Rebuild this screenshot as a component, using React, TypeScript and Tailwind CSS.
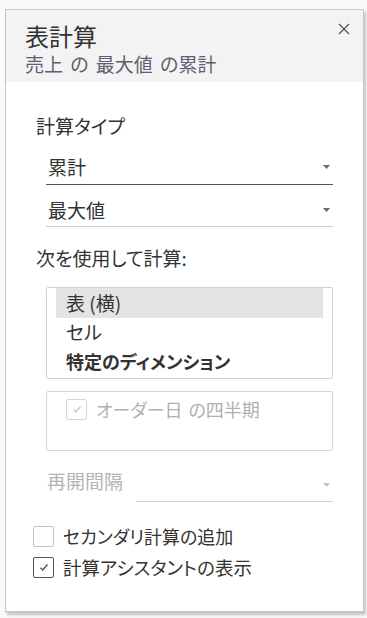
import React from 'react';

const Arrow = ({ light }: { light?: boolean }) => (
  <svg width="7" height="4" viewBox="0 0 7 4" className="shrink-0">
    <path d="M0 0 L7 0 L3.5 4 Z" fill={light ? '#c4c4c4' : '#6b6b6b'} />
  </svg>
);

const Check = ({ color }: { color: string }) => (
  <svg width="10" height="9" viewBox="0 0 10 9">
    <path d="M1.5 4.8 L3.8 7 L8.5 1.5" stroke={color} strokeWidth="1.4" fill="none" />
  </svg>
);

const App: React.FC = () => {
  return (
    <div className="w-[367px] h-[618px] bg-[#fafafa] overflow-hidden pt-[9px] pl-[5px] font-['Noto_Sans_CJK_JP','Noto_Sans',sans-serif] [font-feature-settings:'palt']">
      <div className="w-[359px] h-[603px] bg-white border border-[#c6c6c6] shadow-[2px_3px_3px_rgba(0,0,0,0.22)]">
        {/* Header */}
        <div className="relative h-[72px] bg-[#f3f3f3] pl-[19px] pt-[12px]">
          <div className="text-[24px] leading-[28px] text-[#333]">表計算</div>
          <div className="mt-[2px] text-[19px] leading-[24px] text-[#5b6170] [word-spacing:3px]">売上 の 最大値 の累計</div>
          <button className="absolute top-[12px] right-[12px] w-[14px] h-[14px] flex items-center justify-center">
            <svg width="12" height="12" viewBox="0 0 12 12">
              <path d="M1 1 L11 11 M11 1 L1 11" stroke="#555" strokeWidth="1.3" />
            </svg>
          </button>
        </div>

        {/* Body */}
        <div className="px-[30px] pt-[32px] text-[#333] text-[19px]">
          <div className="leading-[24px]">計算タイプ</div>

          <div className="ml-[10px] mt-[12px] h-[35px] flex items-center justify-between border-b border-[#555] pl-[2px] pr-[3px]">
            <span className="leading-[24px]">累計</span>
            <Arrow />
          </div>
          <div className="ml-[10px] mt-[8px] h-[34px] flex items-center justify-between border-b border-[#ccc] pl-[2px] pr-[3px]">
            <span className="leading-[24px]">最大値</span>
            <Arrow />
          </div>

          <div className="mt-[19px] leading-[24px]">次を使用して計算:</div>

          <div className="ml-[10px] mt-[17px] h-[92px] border border-[#cfcfcf] rounded-[2px] pl-[9px] pr-[9px] pt-0">
            <div className="h-[30px] bg-[#e4e4e4] pl-[10px] flex items-center">表 (横)</div>
            <div className="h-[29px] pl-[10px] flex items-center">セル</div>
            <div className="h-[29px] pl-[10px] flex items-center font-bold text-[18px]">特定のディメンション</div>
          </div>

          <div className="ml-[10px] mt-[12px] h-[60px] border border-[#d6d6d6] rounded-[2px] pl-[19px] pt-[4px]">
            <div className="flex items-center gap-[9px]">
              <div className="w-[21px] h-[21px] border border-[#d4d4d4] rounded-[2px] flex items-center justify-center">
                <Check color="#c8c8c8" />
              </div>
              <span className="text-[18px] text-[#b0b0b0] [word-spacing:2px]">オーダー日 の四半期</span>
            </div>
          </div>

          <div className="ml-[11px] mt-[17px] flex items-end">
            <span className="w-[89px] leading-[24px] text-[#b3b3b3] pb-[9px]">再開間隔</span>
            <div className="flex-1 h-[34px] flex items-center justify-end border-b border-[#d0d0d0] pr-[3px]">
              <Arrow light />
            </div>
          </div>

          <div className="-ml-[3px] mt-[23px] flex flex-col gap-[9px]">
            <div className="flex items-center gap-[9px]">
              <div className="w-[21px] h-[21px] border border-[#c4c4c4] rounded-[2px]" />
              <span className="text-[18px] leading-[22px]">セカンダリ計算の追加</span>
            </div>
            <div className="flex items-center gap-[9px]">
              <div className="w-[21px] h-[21px] border border-[#555] rounded-[2px] flex items-center justify-center">
                <Check color="#555" />
              </div>
              <span className="text-[18.5px] leading-[22px]">計算アシスタントの表示</span>
            </div>
          </div>
        </div>
      </div>
    </div>
  );
};

export default App;
